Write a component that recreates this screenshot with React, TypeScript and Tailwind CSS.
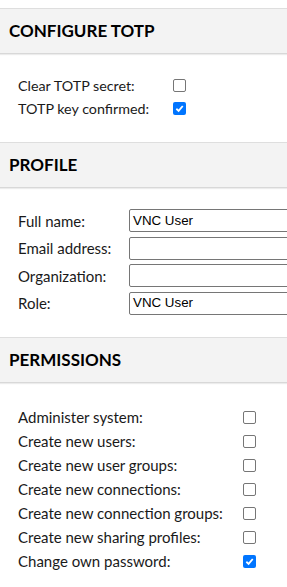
import React from 'react';

const SectionHeader: React.FC<{ title: string }> = ({ title }) => (
    <h2 className="h-[45px] flex items-center px-[9px] bg-[#f3f3f3] border-t border-[#dedede] border-b-0 shadow-[0_1px_0_#d8d8d8,0_2px_1px_#ececec] text-[17px] font-bold text-black">
        {title}
    </h2>
);

const Checkbox: React.FC<{ checked?: boolean }> = ({ checked }) =>
    checked ? (
        <span className="w-[13px] h-[13px] rounded-[2px] bg-[#0075ff] flex items-center justify-center">
            <svg width="9" height="9" viewBox="0 0 10 10">
                <path d="M1.5 5.3 L4 7.6 L8.6 2.2" fill="none" stroke="white" strokeWidth="2" />
            </svg>
        </span>
    ) : (
        <span className="w-[13px] h-[13px] rounded-[2px] border border-[#767676] bg-white" />
    );

const totpRows = [
    { label: 'Clear TOTP secret:', checked: false },
    { label: 'TOTP key confirmed:', checked: true },
];

const profileRows = [
    { label: 'Full name:', value: 'VNC User' },
    { label: 'Email address:', value: '' },
    { label: 'Organization:', value: '' },
    { label: 'Role:', value: 'VNC User' },
];

const permissionRows = [
    { label: 'Administer system:', checked: false },
    { label: 'Create new users:', checked: false },
    { label: 'Create new user groups:', checked: false },
    { label: 'Create new connections:', checked: false },
    { label: 'Create new connection groups:', checked: false },
    { label: 'Create new sharing profiles:', checked: false },
    { label: 'Change own password:', checked: true },
];

export default function App() {
    return (
        <div className="w-[287px] h-[587px] overflow-hidden bg-white pt-2 font-['Lato','Carlito',sans-serif] text-[15px] text-[#1a1a1a]">
            <SectionHeader title="CONFIGURE TOTP" />
            <div className="pt-[21px] pb-[22px] pl-[18px] text-[14.3px]">
                {totpRows.map((row) => (
                    <div key={row.label} className="h-[23px] flex items-center">
                        <span className="w-[155px]">{row.label}</span>
                        <Checkbox checked={row.checked} />
                    </div>
                ))}
            </div>

            <SectionHeader title="PROFILE" />
            <div className="pt-[20px] pb-[20px] pl-[18px]">
                {profileRows.map((row) => (
                    <div key={row.label} className="h-[27.5px] flex items-center">
                        <span className="w-[111px] shrink-0">{row.label}</span>
                        <div className="shrink-0 w-[200px] h-[23px] border border-[#767676] rounded-[2px] px-[3px] flex items-center font-['Liberation_Sans',Arial,sans-serif] text-[13.33px] text-black">
                            {row.value}
                        </div>
                    </div>
                ))}
            </div>

            <SectionHeader title="PERMISSIONS" />
            <div className="pt-[23px] pl-[18px]">
                {permissionRows.map((row) => (
                    <div key={row.label} className="h-[24px] flex items-center">
                        <span className="w-[225px]">{row.label}</span>
                        <Checkbox checked={row.checked} />
                    </div>
                ))}
            </div>
        </div>
    );
}
